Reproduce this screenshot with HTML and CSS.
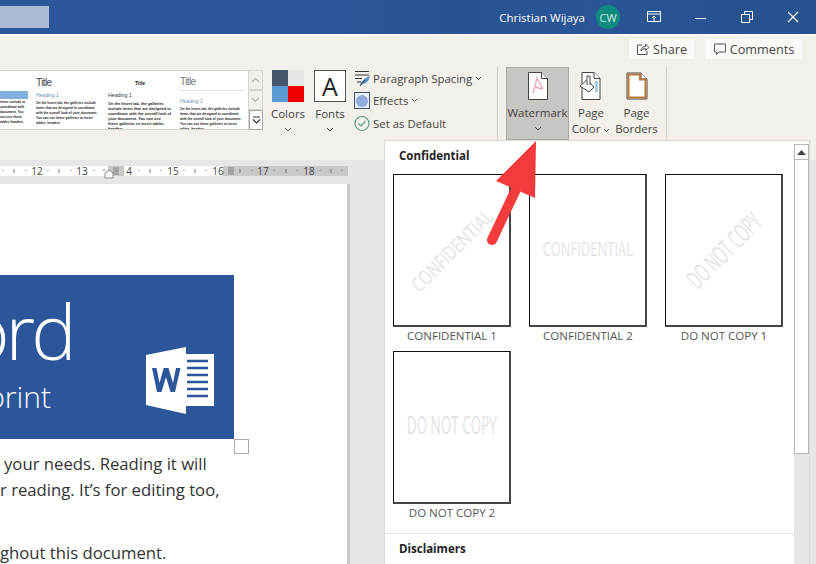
FILE: index.html
```html
<!DOCTYPE html>
<html lang="en">
<head>
<meta charset="utf-8">
<title>Word watermark gallery</title>
<link rel="stylesheet" href="styles.css">
</head>
<body>
<div class="app">
  <header class="titlebar">
    <div class="searchbox"></div>
    <div class="titleright">
      <span class="username">Christian Wijaya</span>
      <span class="avatar">CW</span>
      <svg class="winicon display" width="20" height="14" viewBox="0 0 20 14"><path d="M3.500 1.500h13v10h-13zM3.500 4h13M10 11V6M8 8l2-2 2 2" fill="none" stroke="#fff" stroke-width="1"/></svg>
      <svg class="winicon" width="14" height="14" viewBox="0 0 14 14"><path d="M1 8.500h11" stroke="#fff" stroke-width="1" fill="none"/></svg>
      <svg class="winicon" width="14" height="14" viewBox="0 0 14 14"><path d="M1.500 4.500h8v8h-8zM4.500 4.500v-3h8v8h-3" fill="none" stroke="#fff" stroke-width="1"/></svg>
      <svg class="winicon" width="14" height="14" viewBox="0 0 14 14"><path d="M2 2l10 10M12 2L2 12" stroke="#fff" stroke-width="1.100"/></svg>
    </div>
  </header>

  <section class="ribbon">
    <div class="sharerow">
      <button class="pill share">
        <svg width="14" height="14" viewBox="0 0 14 14"><path d="M6 3H1.500v9.500h9.500V9M5 9c0-3 2-4.500 4.500-4.500V2L13 5.500 9.500 8.500V6.500C7.500 6.500 6 7.500 5 9z" fill="none" stroke="#555" stroke-width="1"/></svg>
        Share
      </button>
      <button class="pill comments">
        <svg width="14" height="14" viewBox="0 0 14 14"><path d="M1.500 2h11v8H6l-2.500 2.500V10H1.500z" fill="none" stroke="#555" stroke-width="1"/></svg>
        Comments
      </button>
    </div>
    <div class="tools">
      <div class="gallery">
        <div class="styles">
          <div class="style s1">
            <div class="bluebar"></div>
            <p class="tiny">items include to coordinate with document. You can use these tables headers</p>
          </div>
          <div class="style s2">
            <div class="st">Title</div>
            <div class="hd blue">Heading 1</div>
            <p class="tiny">On the Insert tab, the galleries include items that are designed to coordinate with the overall look of your document. You can use these galleries to insert tables, headers</p>
          </div>
          <div class="style s3">
            <div class="st small">Title</div>
            <div class="hd dark">Heading 1</div>
            <p class="tiny">On the Insert tab, the galleries include items that are designed to coordinate with the overall look of your document. You can use these galleries to insert tables, headers</p>
          </div>
          <div class="style s4">
            <div class="st grey ruled">Title</div>
            <div class="hd blue low">Heading 1</div>
            <p class="tiny">On the Insert tab, the galleries include items that are designed to coordinate with the overall look of your document. You can use these galleries to insert tables, headers</p>
          </div>
        </div>
        <div class="scroller">
          <span class="sbtn"><svg width="9" height="6" viewBox="0 0 9 6"><path d="M1 5l3.500-3.500L8 5" fill="none" stroke="#b5b3b0" stroke-width="1.200"/></svg></span>
          <span class="sbtn"><svg width="9" height="6" viewBox="0 0 9 6"><path d="M1 1l3.500 3.500L8 1" fill="none" stroke="#b5b3b0" stroke-width="1.200"/></svg></span>
          <span class="sbtn more"><svg width="9" height="8" viewBox="0 0 9 8"><path d="M1 1h7M1 3.500l3.500 3.500L8 3.500" fill="none" stroke="#333" stroke-width="1.200"/></svg></span>
        </div>
      </div>

      <div class="tile">
        <div class="colors"><i class="c1"></i><i class="c2"></i><i class="c3"></i><i class="c4"></i></div>
        <span class="tlabel">Colors</span>
        <svg class="chev" width="8" height="5" viewBox="0 0 8 5"><path d="M1 1l3 3 3-3" fill="none" stroke="#555" stroke-width="1"/></svg>
      </div>
      <div class="tile fonts">
        <div class="fontbox">A</div>
        <span class="tlabel">Fonts</span>
        <svg class="chev" width="8" height="5" viewBox="0 0 8 5"><path d="M1 1l3 3 3-3" fill="none" stroke="#555" stroke-width="1"/></svg>
      </div>

      <div class="minis">
        <div class="mini">
          <svg width="16" height="17" viewBox="0 0 16 17"><path d="M1 1.500h14M1 5h14M1 8.500h7M3 12h4" stroke="#333" stroke-width="1" fill="none"/><path d="M6 15c1-3 4-7 10-9-1 5-4 8-8 8z" fill="#5a90c8"/><path d="M6 16l5-6" stroke="#333" stroke-width="1"/></svg>
          <span>Paragraph Spacing</span>
          <svg width="7" height="5" viewBox="0 0 7 5"><path d="M1 1l2.500 2.500L6 1" fill="none" stroke="#555" stroke-width="1"/></svg>
        </div>
        <div class="mini">
          <span class="effects"><i></i></span>
          <span>Effects</span>
          <svg width="7" height="5" viewBox="0 0 7 5"><path d="M1 1l2.500 2.500L6 1" fill="none" stroke="#555" stroke-width="1"/></svg>
        </div>
        <div class="mini">
          <svg width="16" height="17" viewBox="0 0 16 17"><circle cx="8" cy="8.500" r="7" fill="none" stroke="#5d9d83" stroke-width="1.200"/><path d="M4.500 8.500l2.500 2.500L11.500 6" fill="none" stroke="#5d9d83" stroke-width="1.200"/></svg>
          <span>Set as Default</span>
        </div>
      </div>

      <div class="sep"></div>

      <div class="bigbtn active">
        <svg width="24" height="28" viewBox="0 0 24 28"><path d="M2.500.500h13l6 6v21h-19z" fill="#fff" stroke="#444"/><path d="M15.500.500v6h6" fill="#fff" stroke="#444"/><path d="M7 21l4-15 6 11M8 15l9 2" fill="none" stroke="#e9a9b8" stroke-width="1.400"/></svg>
        <span class="blabel">Watermark</span>
        <svg class="chev" width="8" height="5" viewBox="0 0 8 5"><path d="M1 1l3 3 3-3" fill="none" stroke="#555" stroke-width="1"/></svg>
      </div>
      <div class="bigbtn color">
        <svg width="24" height="28" viewBox="0 0 24 28"><path d="M3 .500h12l6 6v21H3z" fill="#fff" stroke="#444"/><path d="M15 .500v6h6" fill="#fff" stroke="#444"/><path d="M16 9h3v11h-3z" fill="#a8cdec"/><path d="M1 14l7-6 7 7-5 5z" fill="#fff" stroke="#444"/><path d="M8 13V4h3v9" fill="#fff" stroke="#444"/></svg>
        <span class="blabel">Page</span>
        <span class="blabel">Color <svg width="7" height="5" viewBox="0 0 7 5"><path d="M1 1l2.500 2.500L6 1" fill="none" stroke="#555" stroke-width="1"/></svg></span>
      </div>
      <div class="bigbtn borders">
        <svg width="24" height="28" viewBox="0 0 24 28"><path d="M2 1h14l6 6v20H2z" fill="#fff" stroke="#444"/><path d="M16 1v6h6" fill="#fff" stroke="#444"/><path d="M3.500 2.500h11.500v5h5.500v18h-17z" fill="none" stroke="#b7793c" stroke-width="2"/></svg>
        <span class="blabel">Page</span>
        <span class="blabel">Borders</span>
      </div>
      <div class="sep"></div>
    </div>
  </section>

  <main class="docarea">
    <svg class="ruler" width="348" height="20" viewBox="0 -2 348 20">
      <rect x="0" y="0" width="348" height="10" fill="#fff"/>
      <rect x="108" y="0" width="16" height="10" fill="#c8c8c8"/>
      <rect x="223" y="0" width="125" height="10" fill="#c8c8c8"/>
      <g class="rnum">
        <text x="37" y="9">12</text><text x="82" y="9">13</text><text x="129" y="9">4</text><text x="173" y="9">15</text><text x="218" y="9">16</text><text x="263" y="9">17</text><text x="309" y="9">18</text>
      </g>
      <path class="rtick" d="M3 4v1M14 3v4M26 4v1M48 4v1M59 3v4M71 4v1M94 4v1M104 3v2M139 4v1M150 3v4M161 4v1M184 4v1M195 3v4M206 4v1M229 4v1M240 3v4M252 4v1M274 4v1M286 3v4M297 4v1M320 4v1M331 3v4M342 4v1"/>
      <path class="rtick dark" d="M113 2h6M113 4h6M113 6h6M113 8h6M114 1v8M116 1v8M118 1v8M228 2h6M228 4h6M228 6h6M228 8h6M229 1v8M231 1v8M233 1v8"/>
      <path d="M105 7l4-3 4 3v5h-8z" fill="#fff" stroke="#888"/>
    </svg>
    <article class="page">
      <div class="banner">
        <div class="bannertext">
          <div class="word">ord</div>
          <div class="print">print</div>
        </div>
        <svg class="wlogo" width="68" height="67" viewBox="0 0 68 67">
          <path d="M39 7h29v52H39z" fill="#fff"/>
          <path d="M41 14h21M41 21h21M41 28h21M41 35h21M41 42h21M41 49h21" stroke="#2b579a" stroke-width="2.400"/>
          <path d="M0 8L40 0v67L0 58z" fill="#fff"/>
          <path d="M6 21l5 24h4.500l4.500-15 4.500 15H29l5.500-24h-4.500L27 36 22.500 21h-4.800L13.500 36 10.500 21z" fill="#2b579a"/>
        </svg>
        <span class="handle"></span>
      </div>
      <div class="body">
        <p class="para lineone">your needs. Reading it will</p>
        <p class="para linetwo">r reading. It’s for editing too,</p>
        <p class="para linethree">ghout this document.</p>
      </div>
    </article>
  </main>

  <aside class="popup">
    <div class="popscroll">
      <h4 class="sect">Confidential</h4>
      <div class="thumbs">
        <figure class="thumb"><div class="sheet"><span class="wm diag">CONFIDENTIAL</span></div><figcaption>CONFIDENTIAL 1</figcaption></figure>
        <figure class="thumb"><div class="sheet"><span class="wm flat">CONFIDENTIAL</span></div><figcaption>CONFIDENTIAL 2</figcaption></figure>
        <figure class="thumb"><div class="sheet"><span class="wm big diag">DO NOT COPY</span></div><figcaption>DO NOT COPY 1</figcaption></figure>
        <figure class="thumb"><div class="sheet"><span class="wm big flat">DO NOT COPY</span></div><figcaption>DO NOT COPY 2</figcaption></figure>
      </div>
      <h4 class="sect">Disclaimers</h4>
    </div>
    <div class="vscroll">
      <span class="up"><svg width="9" height="5" viewBox="0 0 9 5"><path d="M0 5l4.500-5L9 5z" fill="#444"/></svg></span>
      <span class="thumbbar"></span>
      <span class="track"></span>
    </div>
  </aside>

  <svg class="arrow" width="60" height="112" viewBox="0 0 60 112">
    <path d="M8 100L34 45" stroke="#f43c3c" stroke-width="10" stroke-linecap="round"/>
    <path d="M52 1L12 41l39 17z" fill="#f43c3c"/>
  </svg>
</div>
</body>
</html>
```
FILE: styles.css
```css
* { box-sizing: border-box; }
html, body { margin: 0; padding: 0; }
body { font-family: "Open Sans", "Noto Sans", sans-serif; color: #444; overflow: hidden; }
.app { position: relative; width: 816px; height: 564px; overflow: hidden; background: #e6e6e6; }
p, h4, figure { margin: 0; }

.titlebar { height: 34px; background: linear-gradient(90deg, #2b579a 0%, #2b579a 42%, #285391 55%, #2a5596 72%, #27528f 100%); display: flex; justify-content: space-between; align-items: center; }
.searchbox { width: 49px; height: 22px; background: #a9bbd6; }
.titleright { display: flex; align-items: center; color: #fff; }
.username { font-size: 11.500px; }
.avatar { width: 24px; height: 24px; margin-left: 11px; border-radius: 50%; background: #0f8a7e; color: #cdeee9; font-size: 11px; display: flex; align-items: center; justify-content: center; }
.winicon { display: block; margin-left: 32px; }
.winicon.display { margin-left: 24px; }
.titleright .winicon:nth-of-type(2) { margin-left: 30px; }
.titleright .winicon:last-child { margin-left: 32px; margin-right: 16px; }

.ribbon { height: 126px; background: #f3f0ec; border-top: 2px solid #fbf8f6; }
.sharerow { height: 31px; display: flex; justify-content: flex-end; gap: 9px; padding: 2px 13px 0 0; }
.pill { height: 22px; border: 1px solid #f0eeeb; background: #fbfaf9; font: 12.700px "Open Sans", sans-serif; color: #444; display: flex; align-items: center; justify-content: center; gap: 3px; padding: 0; }
.share { width: 67px; }
.comments { width: 99px; }

.tools { display: flex; align-items: flex-start; height: 73px; }
.gallery { display: flex; margin-top: 3px; }
.styles { width: 249px; height: 60px; background: #fff; border: 1px solid #d6d4d1; border-left: 0; display: flex; overflow: hidden; }
.style { height: 58px; overflow: hidden; flex: none; font-family: "Liberation Sans", sans-serif; color: #222; }
.s1 { width: 28px; padding-top: 20px; }
.s2 { width: 64px; margin-left: 8px; padding-top: 6px; }
.s3 { width: 64px; margin-left: 8px; padding-top: 6px; }
.s4 { width: 64px; margin-left: 8px; padding-top: 5px; }
.bluebar { width: 28px; height: 8px; background: #7fb0de; }
.tiny { font-size: 3.300px; line-height: 5px; font-weight: 700; color: #222; margin-top: 1px; }
.s3 .tiny { font-size: 3.900px; }
.st { font-size: 10px; line-height: 12px; letter-spacing: -.6px; color: #444; }
.st.small { font-size: 5px; font-weight: 700; text-align: center; letter-spacing: 0; color: #222; }
.st.grey { color: #777; }
.st.ruled { border-bottom: 1px solid #e0e0e0; padding-bottom: 2px; }
.hd { font-size: 5px; line-height: 9px; margin-top: 2px; }
.hd.blue { color: #6d8fb5; }
.hd.dark { color: #333; font-size: 5.200px; }
.hd.low { margin-top: 6px; }
.scroller { width: 14px; height: 60px; display: flex; flex-direction: column; }
.sbtn { height: 20px; border: 1px solid #d6d4d1; border-left-width: 0; display: flex; align-items: center; justify-content: center; background: #f3f0ec; }
.sbtn.more { border: 1px solid #aaa8a5; background: #fafafa; }

.tile { width: 32px; margin: 3px 0 0 9px; display: flex; flex-direction: column; align-items: center; }
.tile.fonts { margin-left: 10px; }
.colors { width: 32px; height: 32px; display: grid; grid-template-columns: 1fr 1fr; grid-template-rows: 1fr 1fr; }
.colors i { display: block; }
.c1 { background: #44546a; }
.c2 { background: #e7e6e6; }
.c3 { background: #5b9bd5; }
.c4 { background: #f00000; }
.fontbox { width: 32px; height: 32px; background: #fff; border: 1px solid #555; color: #222; font: 400 25px/30px "Open Sans", sans-serif; text-align: center; }
.tlabel { font-size: 11.500px; line-height: 16px; margin-top: 4px; white-space: nowrap; }
.chev { display: block; margin-top: 5px; }

.minis { margin: 0 0 0 8px; width: 143px; padding-top: 2px; display: flex; flex-direction: column; gap: 4.500px; }
.mini { height: 18px; display: flex; align-items: center; gap: 3px; font-size: 11.400px; white-space: nowrap; }
.effects { width: 16px; height: 17px; border: 1px solid #40536f; display: flex; align-items: center; justify-content: center; background: #e8eef6; }
.effects i { display: block; width: 12px; height: 12px; border-radius: 50%; background: #8fabdc; }
.sep { width: 1px; height: 73px; background: #d2d0cd; }
.bigbtn { margin-left: 0; display: flex; flex-direction: column; align-items: center; padding-top: 5px; font-size: 11.500px; }
.bigbtn.active { width: 63px; margin-left: 8px; height: 73px; background: #c8c6c3; border: 1px solid #aaa8a5; padding-top: 4px; }
.bigbtn.color { width: 44px; }
.bigbtn.borders { width: 47px; margin-right: 6px; }
.blabel { line-height: 16px; white-space: nowrap; }
.bigbtn svg:first-child + .blabel { margin-top: 5px; }

.docarea { height: 404px; padding-top: 4px; position: relative; }
.ruler { display: block; }
.rnum text { font: 10px "Open Sans", sans-serif; fill: #444; text-anchor: middle; }
.rtick { stroke: #777; stroke-width: 1; fill: none; }
.rtick.dark { stroke: #999; }
.page { width: 347px; height: 380px; background: #fff; box-shadow: 3px 0 0 #c9c9c9; padding-top: 91px; }
.banner { position: relative; width: 234px; height: 164px; background: #2b579a; display: flex; justify-content: space-between; color: #fff; }
.bannertext { font-weight: 300; width: 90px; overflow: hidden; }
.word { font-size: 76px; line-height: 80px; margin: 16px 0 0 -35px; letter-spacing: -4px; }
.print { font-size: 30px; line-height: 40px; margin: 6px 0 0 -13px; }
.wlogo { margin: 72px 20px 0 0; }
.handle { position: absolute; left: 234px; top: 164px; width: 15px; height: 15px; background: #fff; border: 1px solid #aaa; }
.body { color: #333; font-size: 16.700px; line-height: 26px; }
.para { white-space: nowrap; }
.lineone { padding: 12px 0 0 4px; }
.linethree { margin-top: 37px; }

.popup { position: absolute; left: 384px; top: 140px; width: 426px; height: 424px; background: #fff; border: 1px solid #dcdad7; border-bottom: 0; display: flex; }
.popscroll { width: 409px; }
.sect { font-size: 11.500px; line-height: 16px; font-weight: 700; color: #222; margin: 7px 0 0 14px; }
.thumbs { display: grid; grid-template-columns: repeat(3, 118px); column-gap: 18px; row-gap: 6px; padding: 10px 0 0 8px; height: 370px; border-bottom: 1px solid #e4e2df; align-content: start; }
.thumb { display: flex; flex-direction: column; align-items: center; }
.sheet { width: 118px; height: 153px; border: 1px solid #111; border-right: 2px solid #444; border-bottom: 2px solid #444; background: #fff; display: flex; align-items: center; justify-content: center; overflow: hidden; }
.wm { font-family: "Liberation Sans Narrow", "Open Sans", sans-serif; font-size: 20px; color: #e3e3e3; white-space: nowrap; }
.wm.flat { transform: translateY(-2px) scaleX(.65); }
.wm.diag { transform: rotate(-45deg) scaleX(.76); }
.wm.big { font-size: 26px; }
.wm.big.flat { transform: translateY(-3px) scaleX(.52); }
.wm.big.diag { transform: rotate(-45deg) scaleX(.54); }
figcaption { font-size: 11.500px; line-height: 18px; color: #555; white-space: nowrap; }
.vscroll { width: 15px; margin: 3px 0 0 0; display: flex; flex-direction: column; }
.up { height: 16px; border: 1px solid #b8b6b3; display: flex; align-items: center; justify-content: center; }
.thumbbar { height: 294px; border: 1px solid #b8b6b3; border-top: 0; background: #fff; }
.track { flex: 1; background: #e6e6e6; }
.arrow { position: absolute; left: 484px; top: 140px; }
```
